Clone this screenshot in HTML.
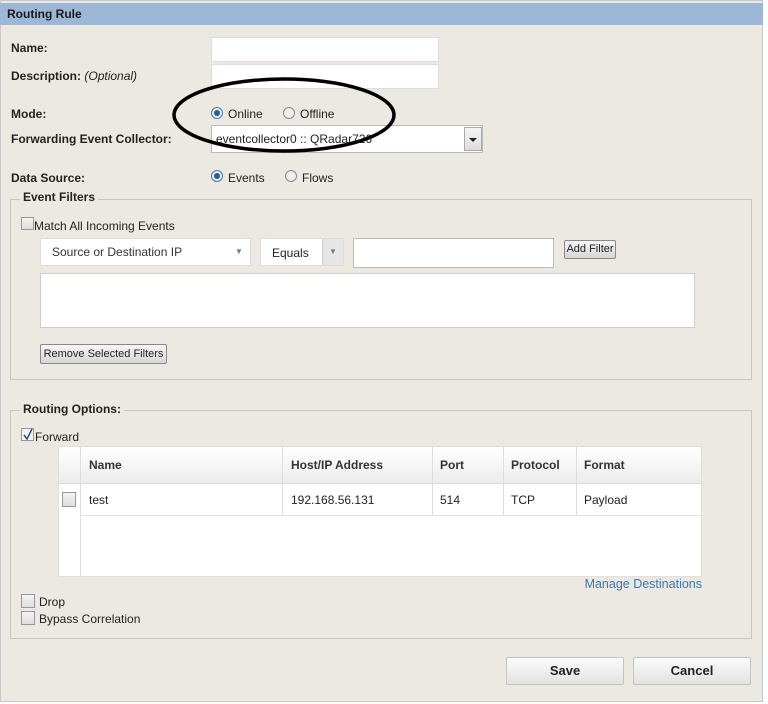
<!DOCTYPE html>
<html><head><style>
*{margin:0;padding:0;box-sizing:border-box}
body{width:768px;height:704px;background:#fff;font-family:"Liberation Sans",sans-serif;font-size:12px;color:#222;position:relative;overflow:hidden}
.a{position:absolute}
.b{font-weight:bold}
.in{position:absolute;background:#fff;border:1px solid #ddd}
.fs{position:absolute;border:1px solid #c8c6c0}
.leg{position:absolute;background:#ece9e2;font-weight:bold;padding:0 3px}
.cb{position:absolute;width:13px;height:13px;border:1px solid #999;background:linear-gradient(#f4f4f4,#ddd)}
.rad{position:absolute;width:12px;height:12px;border-radius:50%;border:1px solid #888;background:#eee}
.rad.on{border-color:#4a78a8}
.rad.on::after{content:"";position:absolute;left:2px;top:2px;width:6px;height:6px;border-radius:50%;background:#1f5f9f}
.btn{position:absolute;border:1px solid #888;border-radius:2px;background:linear-gradient(#f6f6f6,#d6d6d6);font-size:11px;text-align:center}
.big{position:absolute;border:1px solid #c4c4c4;border-radius:2px;background:linear-gradient(#fbfbfb,#e2e2e2);font-weight:bold;font-size:13px;text-align:center;line-height:26px}
</style></head><body>
<div class="a" style="left:0;top:0;width:763px;height:702px;background:#ece9e2;border:1px solid #c8c8c8"></div>
<div class="a b" style="left:0;top:3px;width:763px;height:22px;background:#9cb8d6;padding:4px 7px;font-size:12px;color:#1a1a1a">Routing Rule</div>

<div class="a b" style="left:11px;top:41px">Name:</div>
<div class="in" style="left:211px;top:37px;width:228px;height:25px"></div>
<div class="a" style="left:11px;top:69px"><b>Description:</b> <i>(Optional)</i></div>
<div class="in" style="left:211px;top:64px;width:228px;height:25px"></div>

<div class="a b" style="left:11px;top:107px">Mode:</div>
<div class="rad on" style="left:211px;top:107px"></div><div class="a" style="left:228px;top:107px">Online</div>
<div class="rad" style="left:283px;top:107px"></div><div class="a" style="left:300px;top:107px">Offline</div>
<div class="a b" style="left:11px;top:132px">Forwarding Event Collector:</div>
<div class="in" style="left:211px;top:125px;width:272px;height:28px;border-color:#bbb;padding:6px 4px">eventcollector0 :: QRadar726</div>
<div class="a" style="left:464px;top:127px;width:18px;height:24px;border:1px solid #aaa;background:linear-gradient(#f4f4f4,#ddd)"><svg width="16" height="22"><path d="M4 10h8l-4 4z" fill="#222"/></svg></div>
<svg class="a" style="left:160px;top:70px" width="250" height="95"><ellipse cx="124" cy="45" rx="110" ry="36" fill="none" stroke="#000" stroke-width="3.5"/></svg>

<div class="a b" style="left:11px;top:171px">Data Source:</div>
<div class="rad on" style="left:211px;top:170px"></div><div class="a" style="left:228px;top:171px">Events</div>
<div class="rad" style="left:285px;top:170px"></div><div class="a" style="left:302px;top:171px">Flows</div>

<div class="fs" style="left:10px;top:199px;width:742px;height:181px"></div>
<div class="leg" style="left:20px;top:190px">Event Filters</div>
<div class="cb" style="left:21px;top:217px"></div><div class="a" style="left:34px;top:219px">Match All Incoming Events</div>
<div class="in" style="left:40px;top:238px;width:211px;height:28px;padding:6px 11px;color:#333">Source or Destination IP<span style="position:absolute;left:194px;top:8px;font-size:8px;color:#777">▼</span></div>
<div class="in" style="left:260px;top:238px;width:84px;height:28px;padding:7px 11px">Equals<span style="position:absolute;left:61px;top:0;width:21px;height:26px;background:#e6e6e6;border-left:1px solid #ccc;font-size:8px;color:#777;text-align:center;line-height:26px">▼</span></div>
<div class="in" style="left:353px;top:238px;width:201px;height:30px;border-color:#bbb"></div>
<div class="btn" style="left:564px;top:240px;width:52px;height:19px;line-height:16px">Add Filter</div>
<div class="in" style="left:40px;top:273px;width:655px;height:55px;border-color:#ccc"></div>
<div class="btn" style="left:40px;top:344px;width:127px;height:20px;line-height:18px">Remove Selected Filters</div>

<div class="fs" style="left:10px;top:410px;width:742px;height:229px"></div>
<div class="leg" style="left:20px;top:402px">Routing Options:</div>
<div class="cb" style="left:21px;top:428px;background:#f4f4f4"><svg class="a" style="left:0;top:-1px" width="12" height="13"><path d="M2 7l3 4 5-10" fill="none" stroke="#2a4d8a" stroke-width="1.5"/></svg></div>
<div class="a" style="left:35px;top:430px">Forward</div>

<div class="a" style="left:58px;top:446px;width:644px;height:131px;background:#fff;border:1px solid #e0e0e0"></div>
<div class="a" style="left:58px;top:446px;width:644px;height:38px;background:linear-gradient(#fff,#ececec);border:1px solid #ddd"></div>
<div class="a" style="left:80px;top:446px;width:1px;height:131px;background:#ddd"></div>
<div class="a" style="left:282px;top:446px;width:1px;height:69px;background:#ddd"></div>
<div class="a" style="left:432px;top:446px;width:1px;height:69px;background:#ddd"></div>
<div class="a" style="left:503px;top:446px;width:1px;height:69px;background:#ddd"></div>
<div class="a" style="left:576px;top:446px;width:1px;height:69px;background:#ddd"></div>
<div class="a" style="left:80px;top:515px;width:621px;height:1px;background:#e4e4e4"></div>
<div class="a b" style="left:89px;top:458px;color:#333">Name</div>
<div class="a b" style="left:291px;top:458px;color:#333">Host/IP Address</div>
<div class="a b" style="left:440px;top:458px;color:#333">Port</div>
<div class="a b" style="left:511px;top:458px;color:#333">Protocol</div>
<div class="a b" style="left:584px;top:458px;color:#333">Format</div>
<div class="cb" style="left:62px;top:492px;width:14px;height:15px"></div>
<div class="a" style="left:89px;top:493px">test</div>
<div class="a" style="left:291px;top:493px">192.168.56.131</div>
<div class="a" style="left:440px;top:493px">514</div>
<div class="a" style="left:511px;top:493px">TCP</div>
<div class="a" style="left:584px;top:493px">Payload</div>
<div class="a" style="right:66px;top:577px;color:#3a78ae;font-size:12.5px">Manage Destinations</div>

<div class="cb" style="left:21px;top:594px;width:14px;height:14px"></div><div class="a" style="left:39px;top:595px">Drop</div>
<div class="cb" style="left:21px;top:611px;width:14px;height:14px"></div><div class="a" style="left:39px;top:612px">Bypass Correlation</div>

<div class="big" style="left:506px;top:657px;width:118px;height:28px">Save</div>
<div class="big" style="left:633px;top:657px;width:118px;height:28px">Cancel</div>
</body></html>
